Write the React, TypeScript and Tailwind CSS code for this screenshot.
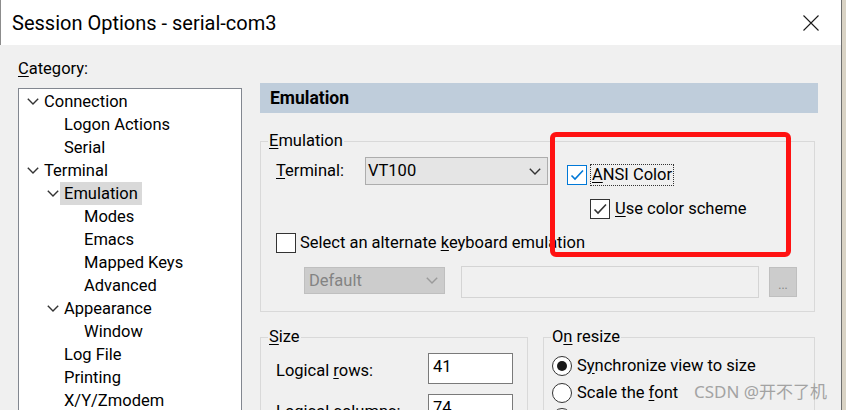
import React from 'react';

type TreeNode = { label: string; level: 0 | 1 | 2; open?: boolean; selected?: boolean };

const tree: TreeNode[] = [
  { label: 'Connection', level: 0, open: true },
  { label: 'Logon Actions', level: 1 },
  { label: 'Serial', level: 1 },
  { label: 'Terminal', level: 0, open: true },
  { label: 'Emulation', level: 1, open: true, selected: true },
  { label: 'Modes', level: 2 },
  { label: 'Emacs', level: 2 },
  { label: 'Mapped Keys', level: 2 },
  { label: 'Advanced', level: 2 },
  { label: 'Appearance', level: 1, open: true },
  { label: 'Window', level: 2 },
  { label: 'Log File', level: 1 },
  { label: 'Printing', level: 1 },
  { label: 'X/Y/Zmodem', level: 1 },
];

const indent = ['pl-[7px]', 'pl-[27px]', 'pl-[47px]'];

function Chevron({ className = '' }: { className?: string }) {
  return (
    <svg width="12" height="7" viewBox="0 0 12 7" className={className}>
      <polyline points="0.8,0.8 6,6 11.2,0.8" fill="none" stroke="#333" strokeWidth="1.4" />
    </svg>
  );
}

function Check({ color }: { color: string }) {
  return (
    <svg width="16" height="16" viewBox="0 0 16 16">
      <polyline points="2.5,8.5 6,12 14,3.5" fill="none" stroke={color} strokeWidth="1.6" />
    </svg>
  );
}

function Checkbox({ checked, blue }: { checked?: boolean; blue?: boolean }) {
  return (
    <span
      className={
        'flex h-[20px] w-[20px] shrink-0 items-center justify-center bg-white border ' +
        (blue ? 'border-[#0078d7]' : 'border-[#333333]')
      }
    >
      {checked && <Check color={blue ? '#0078d7' : '#333333'} />}
    </span>
  );
}

function Radio({ checked }: { checked?: boolean }) {
  return (
    <span className="flex h-[20px] w-[20px] shrink-0 items-center justify-center rounded-full border border-[#333333] bg-white">
      {checked && <span className="h-[10px] w-[10px] rounded-full bg-[#1a1a1a]" />}
    </span>
  );
}

function Group({ label, className = '', children }: { label: React.ReactNode; className?: string; children: React.ReactNode }) {
  return (
    <fieldset className={'border border-[#d9d9d9] ' + className}>
      <legend className="ml-[7px] px-[1px] leading-[20px]">{label}</legend>
      {children}
    </fieldset>
  );
}

export default function App() {
  return (
    <div className="relative h-[410px] w-[846px] overflow-hidden bg-[#d9d3c5] font-['Roboto',sans-serif] text-black">
      <div className="h-[410px] w-[842px] border-r border-[#6f6f6f]">
        {/* title bar */}
        <div className="flex h-[45px] items-center justify-between border-l border-[#8c8c8c] bg-white pl-[11px] pr-[22px]">
          <span className="text-[20px] leading-[26px]">Session Options - serial-com3</span>
          <svg width="16" height="16" viewBox="0 0 16 16">
            <path d="M0.5 0.5 L15.5 15.5 M15.5 0.5 L0.5 15.5" stroke="#1a1a1a" strokeWidth="1.1" />
          </svg>
        </div>

        <div className="flex h-[365px] bg-[#f0f0f0] text-[16.5px] leading-[20px]">
          {/* category tree */}
          <div className="ml-[18px] w-[224px] shrink-0">
            <div className="mt-[14px]">
              <u className="underline-offset-2">C</u>ategory:
            </div>
            <div className="mt-[9px] h-[340px] border border-[#828790] bg-white pt-[1px]">
              {tree.map((n) => (
                <div key={n.label} className={'flex h-[23px] items-center ' + indent[n.level]}>
                  <span className="flex w-[14px] shrink-0 items-center">
                    {n.open && <Chevron className="ml-[1px]" />}
                  </span>
                  <span className={'flex h-[23px] items-center px-[4px] ' + (n.selected ? 'bg-[#d9d9d9]' : '')}>
                    {n.label}
                  </span>
                </div>
              ))}
            </div>
          </div>

          {/* settings panel */}
          <div className="ml-[18px] w-[558px] shrink-0">
            <div className="mt-[38px] flex h-[30px] items-center bg-[#bfcddb] pl-[10px] text-[17.5px] font-bold">Emulation</div>

            <Group label={<><u className="underline-offset-2">E</u>mulation</>} className="mt-[18px] w-[555px] pb-[13px]">
              <div className="flex items-start">
                <div className="mt-[6px] flex h-[28px] items-center">
                  <span className="w-[104px] pl-[15px]">
                    <u className="underline-offset-2">T</u>erminal:
                  </span>
                  <div className="flex h-[28px] w-[183px] items-center justify-between border border-[#adadad] bg-[#e5e5e5] pl-[2px] pr-[6px]">
                    <span>VT100</span>
                    <Chevron />
                  </div>
                </div>
                <div className="ml-[19px] mt-[13px]">
                  <div className="flex h-[21px] items-center">
                    <Checkbox checked blue />
                    <span className="ml-[3px] border border-dotted border-[#333] px-[1px] leading-[20px]">
                      <u className="underline-offset-2">A</u>NSI Color
                    </span>
                  </div>
                  <div className="mt-[14px] flex h-[20px] items-center pl-[23px]">
                    <Checkbox checked />
                    <span className="ml-[5px]">
                      <u className="underline-offset-2">U</u>se color scheme
                    </span>
                  </div>
                </div>
              </div>

              <div className="mt-[14px] flex h-[20px] items-center pl-[15px]">
                <Checkbox />
                <span className="ml-[4px]">
                  Select an alternate <u className="underline-offset-2">k</u>eyboard emulation
                </span>
              </div>

              <div className="mt-[13px] flex items-start pl-[43px]">
                <div className="mt-[1px] flex h-[27px] w-[141px] items-center justify-between border border-[#bfbfbf] bg-[#cccccc] pl-[4px] pr-[6px] text-[#838383]">
                  <span>Default</span>
                  <svg width="12" height="7" viewBox="0 0 12 7">
                    <polyline points="0.8,0.8 6,6 11.2,0.8" fill="none" stroke="#9a9a9a" strokeWidth="1.4" />
                  </svg>
                </div>
                <div className="ml-[16px] h-[32px] w-[298px] border border-[#d4d4d4] bg-[#f0f0f0]" />
                <div className="ml-[10px] mt-[1px] flex h-[30px] w-[28px] items-end justify-center border border-[#bfbfbf] bg-[#cccccc] pb-[5px] text-[12px] leading-[12px] text-[#838383]">
                  ...
                </div>
              </div>
            </Group>

            <div className="mt-[15px] flex items-start">
              <Group label={<><u className="underline-offset-2">S</u>ize</>} className="h-[120px] w-[268px]">
                <div className="mt-[6px] flex items-start">
                  <span className="mt-[8px] w-[167px] pl-[15px]">
                    Logical <u className="underline-offset-2">r</u>ows:
                  </span>
                  <div className="h-[31px] w-[85px] border border-[#7a7a7a] bg-white pl-[4px] pt-[3px]">41</div>
                </div>
                <div className="mt-[10px] flex items-start">
                  <span className="mt-[8px] w-[167px] pl-[15px]">
                    Logical <u className="underline-offset-2">c</u>olumns:
                  </span>
                  <div className="h-[31px] w-[85px] border border-[#7a7a7a] bg-white pl-[4px] pt-[3px]">74</div>
                </div>
              </Group>

              <Group label={<>O<u className="underline-offset-2">n</u> resize</>} className="ml-[15px] h-[120px] w-[272px]">
                <div className="mt-[9px] flex h-[20px] items-center pl-[8px]">
                  <Radio checked />
                  <span className="ml-[5px]">
                    S<u className="underline-offset-2">y</u>nchronize view to size
                  </span>
                </div>
                <div className="mt-[7px] flex h-[20px] items-center pl-[8px]">
                  <Radio />
                  <span className="ml-[5px]">
                    Scale the <u className="underline-offset-2">f</u>ont
                  </span>
                </div>
                <div className="mt-[5px] flex h-[20px] items-center pl-[8px]">
                  <Radio />
                  <span className="ml-[5px]">Scroll the view</span>
                </div>
              </Group>
            </div>
          </div>
        </div>
      </div>

      {/* annotation + watermark overlays */}
      <div className="pointer-events-none absolute left-[550px] top-[132px] h-[125px] w-[241px] rounded-[6px] border-[5px] border-[#ff1212]" />
      <div className="pointer-events-none absolute left-[694px] top-[381px] font-['Noto_Sans','Noto_Sans_CJK_SC',sans-serif] text-[17px] leading-[22px] text-[#a3a3a3]">
        CSDN @开不了机
      </div>
    </div>
  );
}
